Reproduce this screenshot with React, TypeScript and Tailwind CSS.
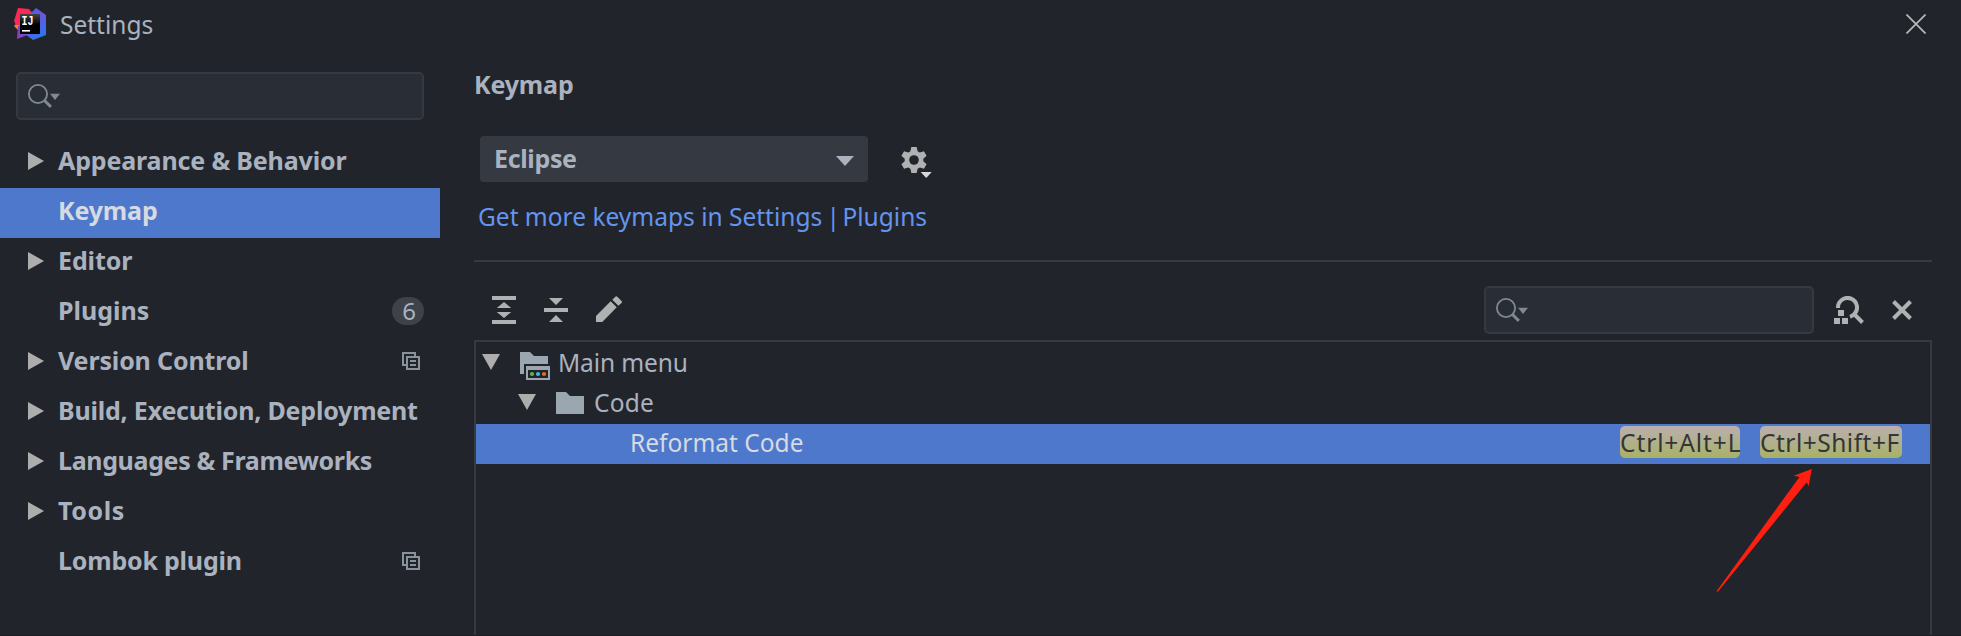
import React from "react";
import clsx from "clsx";

const menuItems = [
  { label: "Appearance & Behavior", arrow: true, tracking: "tracking-[-0.15px]" },
  { label: "Keymap", active: true, tracking: "tracking-[-0.15px]" },
  { label: "Editor", arrow: true, tracking: "tracking-[-0.1px]" },
  { label: "Plugins", count: 6, tracking: "tracking-[0px]" },
  { label: "Version Control", arrow: true, project: true, tracking: "tracking-[-0.15px]" },
  { label: "Build, Execution, Deployment", arrow: true, tracking: "tracking-[-0.2px]" },
  { label: "Languages & Frameworks", arrow: true, tracking: "tracking-[-0.35px]" },
  { label: "Tools", arrow: true, tracking: "tracking-[0.6px]" },
  { label: "Lombok plugin", project: true, tracking: "tracking-[-0.2px]" },
];

const Logo = () => (
  <svg width="32" height="32" viewBox="0 0 32 32">
    <defs>
      <linearGradient id="blue" x1="0.2" y1="0" x2="0.8" y2="1">
        <stop offset="0" stopColor="#3b63e6" />
        <stop offset="0.4" stopColor="#6c57dc" />
        <stop offset="1" stopColor="#1f7cf0" />
      </linearGradient>
      <linearGradient id="purple" x1="0" y1="1" x2="1" y2="0">
        <stop offset="0" stopColor="#a034c0" />
        <stop offset="1" stopColor="#4a5fe0" />
      </linearGradient>
      <linearGradient id="box" x1="0" y1="0" x2="0" y2="1">
        <stop offset="0" stopColor="#454545" />
        <stop offset="0.55" stopColor="#000" />
      </linearGradient>
    </defs>
    <path d="M0 18l5-5 2 12z" fill="#fc801d" />
    <path d="M4 18h12v8L3 31z" fill="url(#purple)" />
    <path d="M17 5l5-5 10 7v20l-13 5-8-6 8-12z" fill="url(#blue)" />
    <path d="M4 0l11 1 5 6-12 10H2l-2-4z" fill="#fe2857" />
    <path d="M6 6h20v20H6z" fill="url(#box)" />
    <text
      x="7.6"
      y="16.8"
      fill="#fff"
      fontFamily="Liberation Mono, monospace"
      fontWeight="700"
      fontSize="13"
      textLength="12"
      lengthAdjust="spacingAndGlyphs"
    >
      IJ
    </text>
    <path d="M8 22h8v1.6H8z" fill="#fff" />
  </svg>
);

const SearchIcon = () => (
  <svg width="32" height="24" viewBox="0 0 32 24">
    <circle cx="10" cy="10" r="9.1" fill="none" stroke="#7f8b91" strokeWidth="1.8" />
    <path d="M16.5 16.5l6.4 6.4" stroke="#7f8b91" strokeWidth="2.9" />
    <path d="M22 9.7h10l-5 6.2z" fill="#7f8b91" />
  </svg>
);

const SearchField = ({ className }: { className: string }) => (
  <div
    className={clsx(
      "flex h-12 items-center rounded-[5px] border-2 border-[#353941] bg-[#292d35] pl-[10px]",
      className
    )}
  >
    <SearchIcon />
  </div>
);

const ProjectIcon = () => (
  <svg width="18" height="18" viewBox="0 0 18 18" fill="none" stroke="#88929a" strokeWidth="2">
    <path d="M13 4V1H1v12h3M5 5h12v12H5zM8 9h6M8 13h6" />
  </svg>
);

const ExpandedArrow = () => (
  <svg className="mt-[10px]" width="18" height="16" viewBox="0 0 18 16">
    <path d="M0 0h18L9 16z" fill="#adadad" />
  </svg>
);

const Sidebar = () => (
  <aside className="w-[440px] shrink-0 pt-6">
    <SearchField className="mx-4" />
    <ul className="mt-[18px]">
      {menuItems.map((item) => (
        <li
          key={item.label}
          className={clsx(
            "flex h-[50px] items-center pr-4 pb-[5px] pl-7 text-[25px] font-bold whitespace-nowrap",
            item.active ? "bg-[#4d78cc] text-[#d7dae0]" : "text-[#abb2bf]"
          )}
        >
          <span className="w-[30px] shrink-0">
            {item.arrow && (
              <svg width="16" height="18" viewBox="0 0 16 18">
                <path d="M0 0l16 9L0 18z" fill="#adadad" />
              </svg>
            )}
          </span>
          <span className={clsx("leading-[45px]", item.tracking)}>{item.label}</span>
          {item.count && (
            <span className="ml-auto h-7 w-8 rounded-full bg-[#3d424b] pl-[2px] text-center text-[24px] leading-[28px] font-normal">
              {item.count}
            </span>
          )}
          {item.project && (
            <span className="mr-1 ml-auto">
              <ProjectIcon />
            </span>
          )}
        </li>
      ))}
    </ul>
  </aside>
);

const GearIcon = () => (
  <svg width="36" height="38" viewBox="0 0 36 38">
    <g fill="#afb1b3">
      <circle cx="16" cy="20" r="9.4" />
      {[0, 60, 120].map((deg) => (
        <path key={deg} d="M13.3 7h5.4l1 5v16l-1 5h-5.4l-1-5V12z" transform={`rotate(${deg} 16 20)`} />
      ))}
    </g>
    <circle cx="16" cy="20" r="4.8" fill="#21252b" />
    <path d="M22.7 32h11l-5.5 6z" fill="#d8d8d8" />
  </svg>
);

const Toolbar = () => (
  <div className="flex h-[78px] items-center pt-6 pr-5 pb-[6px] pl-4">
    <div className="flex gap-6">
      <svg width="28" height="28" viewBox="0 0 28 28" fill="#afb1b3">
        <path d="M2 0h24v4H2zM2 24h24v4H2zM14 6l7.2 6H6.8zM6.8 16h14.4L14 22z" />
      </svg>
      <svg width="28" height="28" viewBox="0 0 28 28" fill="#afb1b3">
        <path d="M2 12h24v4H2zM7 2h14l-7 7zM14 19l7 7H7z" />
      </svg>
      <svg width="28" height="28" viewBox="0 0 28 28" fill="#afb1b3">
        <path d="M2 26v-6L16.7 5.3l6 6L8.3 26zM18.3 3.7l3-3q1-1 2 0l4.2 4.2q1 1 0 2l-3.1 2.9z" />
      </svg>
    </div>
    <SearchField className="ml-auto w-[330px]" />
    <svg className="ml-5" width="30" height="28" viewBox="0 0 30 28">
      <path d="M4 14h6v6H4zM0 22h6v6H0zM8 22h6v6H8z" fill="#afb1b3" />
      <path
        d="M4 12v-.5a9.5 9.5 0 1 1 16.2 6.7q-1.8 1.8-4.2 2.6M20 18l8.5 8.5"
        fill="none"
        stroke="#afb1b3"
        strokeWidth="4"
      />
    </svg>
    <svg className="ml-7" width="20" height="20" viewBox="0 0 20 20">
      <path d="M1.5 1.5l17 17M18.5 1.5l-17 17" stroke="#afb1b3" strokeWidth="4" />
    </svg>
  </div>
);

const Shortcut = ({ className, children }: { className: string; children: string }) => (
  <span
    className={clsx(
      "mt-[2px] h-8 rounded-[5px] bg-gradient-to-b from-[#bbaeae] to-[#a8b165] leading-[34px] text-[#333537]",
      className
    )}
  >
    {children}
  </span>
);

const KeymapTree = () => (
  <div className="flex-1 border-2 border-b-0 border-[#353941] pt-[2px] text-[24.5px] leading-[37px] whitespace-nowrap text-[#abb2bf]">
    <div className="flex h-10 items-start pl-[6px]">
      <ExpandedArrow />
      <svg className="mt-2 ml-5" width="30" height="28" viewBox="0 0 30 28">
        <path d="M0 0h10l4 4h14v8H4v10H0z" fill="#9aa7b0" />
        <path d="M6 14h24v14H6z" fill="#9aa7b0" />
        <path d="M8 18h20v8H8z" fill="#21252b" />
        <circle cx="12" cy="22" r="2.1" fill="#62b543" />
        <circle cx="18" cy="22" r="2.1" fill="#40b6e0" />
        <circle cx="24" cy="22" r="2.1" fill="#f26522" />
      </svg>
      <span className="ml-[8px] tracking-[-0.1px]">Main menu</span>
    </div>
    <div className="flex h-10 items-start pl-[42px]">
      <ExpandedArrow />
      <svg className="mt-2 ml-5" width="28" height="22" viewBox="0 0 28 22">
        <path d="M0 0h10l4 4h14v18H0z" fill="#9aa7b0" />
      </svg>
      <span className="ml-[10px] tracking-[0.2px]">Code</span>
    </div>
    <div className="flex h-10 items-start bg-[#4d78cc] pr-7 pl-[154px] text-[#d7dae0]">
      <span>Reformat Code</span>
      <Shortcut className="mr-5 ml-auto w-[120px] tracking-[0.9px]">Ctrl+Alt+L</Shortcut>
      <Shortcut className="w-[142px] tracking-[0.5px]">Ctrl+Shift+F</Shortcut>
    </div>
  </div>
);

const App = () => {
  return (
    <div className="relative flex h-[636px] w-[1961px] flex-col overflow-hidden border-b border-[#1b1d24] bg-[#21252b] font-['Noto_Sans',sans-serif]">
      <header className="flex h-12 shrink-0 items-center pr-[35px] pl-[14px]">
        <Logo />
        <h1 className="ml-[14px] pt-[2px] text-[24.5px] leading-[46px] text-[#abb2bf]">Settings</h1>
        <svg className="ml-auto" width="20" height="20" viewBox="0 0 20 20">
          <path d="M.5.5l19 19M19.5.5l-19 19" stroke="#b9b9b9" strokeWidth="1.7" />
        </svg>
      </header>

      <div className="flex min-h-0 flex-1">
        <Sidebar />
        <main className="ml-[34px] flex w-[1458px] flex-col">
          <h2 className="mt-5 text-[25px] leading-8 font-bold tracking-[-0.15px] text-[#abb2bf]">Keymap</h2>
          <div className="mt-9 ml-[6px] flex h-[46px] items-center">
            <div className="flex h-[46px] w-[388px] items-center justify-between rounded-[4px] bg-[#353941] pr-[14px] pl-[14px]">
              <span className="pb-[2px] text-[25px] leading-[44px] font-bold tracking-[-0.35px] text-[#abb2bf]">
                Eclipse
              </span>
              <svg className="mt-[3px]" width="18" height="10" viewBox="0 0 18 10">
                <path d="M0 0h18L9 10z" fill="#abb2bf" />
              </svg>
            </div>
            <span className="ml-[30px]">
              <GearIcon />
            </span>
          </div>
          <a href="#" className="mt-[19px] ml-[4px] text-[24.5px] leading-8 text-[#6494ed]">
            Get more keymaps in Settings<span className="tracking-[-2px]"> | </span>Plugins
          </a>
          <div className="mt-[27px] h-[2px] shrink-0 bg-[#353941]" />
          <Toolbar />
          <KeymapTree />
        </main>
      </div>

      {/* Pointer to the new shortcut */}
      <svg className="absolute top-[468px] left-[1715px]" width="98" height="126" viewBox="0 0 98 126">
        <path d="M96.7 1L78.7 7.7l5.8 1.3L1.7 123l1 1L91.7 14.3l2 4z" fill="#ff1f10" />
      </svg>
    </div>
  );
};

export default App;
